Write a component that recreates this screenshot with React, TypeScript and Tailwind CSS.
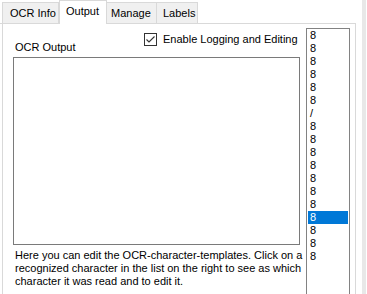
import React from "react";

const items = ["8","8","8","8","8","8","/","8","8","8","8","8","8","8","8","8","8","8"];

export default function App() {
  return (
    <div
      className="w-[367px] h-[294px] overflow-hidden bg-white text-black text-[11px] leading-[13px] flex"
      style={{ fontFamily: '"Liberation Sans", Arial, sans-serif' }}
    >
      {/* Tab control */}
      <div className="w-[356px] h-[400px] flex flex-col">
        <div className="h-[24px] flex items-end pl-[2px] border-b border-[#d9d9d9]">
          <div className="w-[57px] h-[21px] bg-[#f0f0f0] border border-b-0 border-[#d9d9d9] pl-[7px] pt-[4px]">OCR Info</div>
          <div className="w-[48px] h-[24px] bg-white border border-b-0 border-[#d9d9d9] -mb-px pl-[6px] pt-[4px] relative">Output</div>
          <div className="w-[50px] h-[21px] bg-[#f0f0f0] border border-b-0 border-l-0 border-[#d9d9d9] pl-[4px] pt-[4px]">Manage</div>
          <div className="w-[41px] h-[21px] bg-[#f0f0f0] border border-b-0 border-l-0 border-[#d9d9d9] pl-[6px] pt-[4px]">Labels</div>
        </div>
        <div className="flex-1 ml-[2px] border-l border-r border-[#d9d9d9] bg-white flex">
          {/* left column */}
          <div className="w-[303px] pl-[10px] flex flex-col">
            <div className="flex items-start mt-[8px]">
              <div className="mt-[9px] ml-[2px] w-[120px]">OCR Output</div>
              <div className="flex items-center ml-[9px] h-[14px]">
                <div className="w-[13px] h-[13px] border border-[#333333] bg-white flex items-center justify-center">
                  <svg width="11" height="11" viewBox="0 0 11 11">
                    <polyline points="1.5,5.5 4,8 9.5,2.5" fill="none" stroke="#333333" strokeWidth="1.1" />
                  </svg>
                </div>
                <span className="ml-[6px]">Enable Logging and Editing</span>
              </div>
            </div>
            <div className="mt-[3px] w-[287px] h-[188px] border border-[#7a7a7a] bg-white" />
            <div className="mt-[4px] ml-[2px] w-[292px]">
              Here you can edit the OCR-character-templates. Click on a recognized character in the list on the right to see as which character it was read and to edit it.
            </div>
          </div>
          {/* list box */}
          <div className="w-[44px] h-[300px] mt-[4px] border border-[#828282] bg-white px-px">
            {items.map((c, i) => (
              <div
                key={i}
                className={
                  "h-[13px] leading-[13px] pl-[2px] " +
                  (i === 14 ? "bg-[#0078d7] text-white" : "")
                }
              >
                {c}
              </div>
            ))}
          </div>
        </div>
      </div>
      <div className="w-[6px]" />
      <div className="w-[4px] h-full bg-[#e8e8e8]" />
    </div>
  );
}
